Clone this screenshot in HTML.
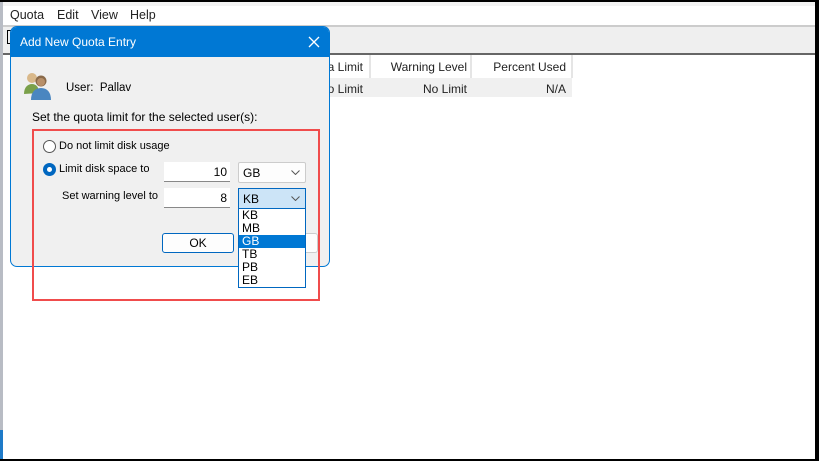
<!DOCTYPE html>
<html><head><style>
*{margin:0;padding:0;box-sizing:border-box}
body{width:819px;height:461px;overflow:hidden;background:#fff;font-family:"Liberation Sans",sans-serif;font-size:12px;color:#000;position:relative}
.a{position:absolute}
</style></head><body>
<div class="a" style="left:0;top:0;width:819px;height:2px;background:#000"></div>
<div class="a" style="left:0;top:459px;width:819px;height:2px;background:#000"></div>
<div class="a" style="left:815px;top:0;width:4px;height:461px;background:#000"></div>
<div class="a" style="left:0;top:2px;width:3px;height:457px;background:#b8bcc4"></div>
<div class="a" style="left:0;top:430px;width:3px;height:29px;background:#1e7ac8"></div>
<div class="a" style="left:3px;top:2px;width:812px;height:4px;background:#f3f3f3"></div>
<div class="a" style="left:10px;top:8px;font-size:12.5px;color:#222">Quota</div>
<div class="a" style="left:57px;top:8px;font-size:12.5px;color:#222">Edit</div>
<div class="a" style="left:91px;top:8px;font-size:12.5px;color:#222">View</div>
<div class="a" style="left:130px;top:8px;font-size:12.5px;color:#222">Help</div>
<div class="a" style="left:3px;top:25px;width:812px;height:2px;background:#ccc"></div>
<div class="a" style="left:3px;top:27px;width:812px;height:26px;background:#efefef"></div>
<div class="a" style="left:3px;top:53px;width:812px;height:2px;background:#666"></div>
<div class="a" style="left:7px;top:30px;width:4px;height:14px;border:1px solid #000;border-right:none"></div>
<div class="a" style="left:369px;top:55px;width:2px;height:23px;background:#e5e5e5"></div>
<div class="a" style="left:470px;top:55px;width:2px;height:23px;background:#e5e5e5"></div>
<div class="a" style="left:571px;top:55px;width:2px;height:23px;background:#e5e5e5"></div>
<div class="a" style="left:300px;top:78px;width:272px;height:19px;background:#f0f0f0"></div>
<div class="a" style="left:320px;top:60px;width:43px;text-align:right;color:#222">a Limit</div>
<div class="a" style="left:372px;top:60px;width:95px;text-align:right;color:#222">Warning Level</div>
<div class="a" style="left:474px;top:60px;width:92px;text-align:right;color:#222">Percent Used</div>
<div class="a" style="left:320px;top:82px;width:43px;text-align:right;color:#222">o Limit</div>
<div class="a" style="left:372px;top:82px;width:95px;text-align:right;color:#222">No Limit</div>
<div class="a" style="left:474px;top:82px;width:92px;text-align:right;color:#222">N/A</div>

<div class="a" style="left:10px;top:26px;width:320px;height:241px;background:#f0f0f0;border:1px solid #0078d4;border-radius:7px;overflow:hidden">
<div class="a" style="left:0;top:0;width:320px;height:30px;background:#0078d4"></div>
<div class="a" style="left:9px;top:8px;color:#fff;font-size:12px">Add New Quota Entry</div>
<svg class="a" style="left:297px;top:9px" width="12" height="12" viewBox="0 0 12 12"><path d="M1 1L11 11M11 1L1 11" stroke="#fff" stroke-width="1.3"/></svg>
<svg class="a" style="left:11px;top:43px" width="32" height="32" viewBox="0 0 32 32"><circle cx="10" cy="8" r="5" fill="#d9b88a"/><path d="M2 24c0-7 4-10 8-10s7 3 7 9z" fill="#7aa04a"/><circle cx="19" cy="11" r="5.5" fill="#8a6a4a"/><path d="M9 30c0-8 4-12 10-12s10 4 10 12z" fill="#4a86c0"/><circle cx="19" cy="12" r="4" fill="#b8906a"/></svg>
<div class="a" style="left:55px;top:55px;font-size:11.5px">User:&nbsp;&nbsp;Pallav</div>
<div class="a" style="left:21px;top:83px;font-size:12px">Set the quota limit for the selected user(s):</div>
<div class="a" style="left:32px;top:113px;width:13px;height:13px;border:1px solid #555;border-radius:50%;background:#fff"></div>
<div class="a" style="left:48px;top:113px;font-size:11px">Do not limit disk usage</div>
<div class="a" style="left:32px;top:136px;width:13px;height:13px;border-radius:50%;background:#0067c0"></div>
<div class="a" style="left:36px;top:140px;width:5px;height:5px;border-radius:50%;background:#fff"></div>
<div class="a" style="left:48px;top:136px;font-size:11px">Limit disk space to</div>
<div class="a" style="left:51px;top:163px;font-size:11px">Set warning level to</div>
<div class="a" style="left:153px;top:135px;width:66px;height:20px;background:#fff;border-bottom:1px solid #888"></div>
<div class="a" style="left:153px;top:138px;width:63px;text-align:right;font-size:12px">10</div>
<div class="a" style="left:153px;top:161px;width:66px;height:20px;background:#fff;border-bottom:1px solid #888"></div>
<div class="a" style="left:153px;top:164px;width:63px;text-align:right;font-size:12px">8</div>
<div class="a" style="left:227px;top:135px;width:68px;height:21px;background:#fdfdfd;border:1px solid #ccc;border-radius:2px"></div>
<div class="a" style="left:232px;top:139px;font-size:12px">GB</div>
<svg class="a" style="left:280px;top:143px" width="9" height="5" viewBox="0 0 9 5"><path d="M0.5 0.5L4.5 4.5L8.5 0.5" stroke="#555" fill="none"/></svg>
<div class="a" style="left:227px;top:161px;width:68px;height:21px;background:#cce4f7;border:1px solid #0067c0"></div>
<div class="a" style="left:232px;top:165px;font-size:12px">KB</div>
<svg class="a" style="left:280px;top:169px" width="9" height="5" viewBox="0 0 9 5"><path d="M0.5 0.5L4.5 4.5L8.5 0.5" stroke="#555" fill="none"/></svg>
<div class="a" style="left:151px;top:206px;width:72px;height:20px;background:#fdfdfd;border:1px solid #0067c0;border-radius:3px;text-align:center;line-height:18px;font-size:12px">OK</div>
<div class="a" style="left:295px;top:206px;width:12px;height:20px;background:#fdfdfd;border:1px solid #ccc;border-left:none;border-radius:0 3px 3px 0"></div>
</div>
<div class="a" style="left:238px;top:208px;width:68px;height:80px;background:#fff;border:1px solid #0067c0;font-size:12px;line-height:13px">
<div style="padding-left:3px">KB</div><div style="padding-left:3px">MB</div><div style="padding-left:3px;background:#0078d4;color:#fff">GB</div><div style="padding-left:3px">TB</div><div style="padding-left:3px">PB</div><div style="padding-left:3px">EB</div>
</div>
<div class="a" style="left:32px;top:129px;width:288px;height:172px;border:2px solid #f04c4c"></div>
</body></html>
